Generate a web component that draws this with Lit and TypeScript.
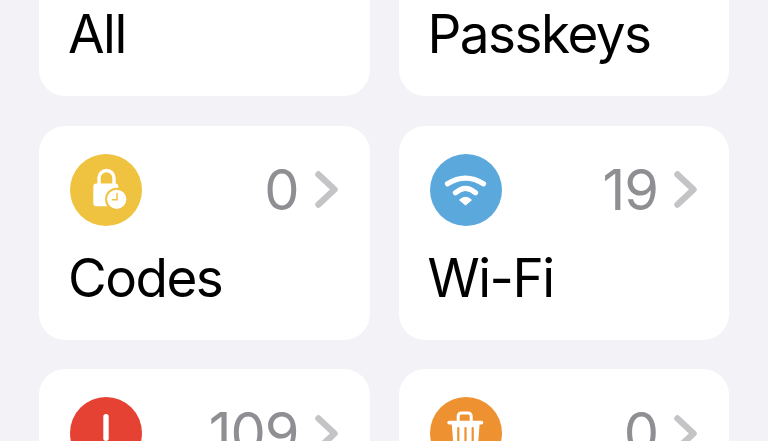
import { LitElement, html, css, svg } from 'lit';
import { customElement } from 'lit/decorators.js';

interface Tile {
  label: string;
  count: number;
  color: string;
  glyph: unknown;
}

const codesGlyph = svg`
  <path d="M29 31v-7a7.500 7.500 0 0 1 15 0V31" fill="none" stroke="#fff" stroke-width="3.400"/>
  <rect x="23.300" y="29.500" width="25" height="22.800" rx="3" fill="#fff"/>
  <circle cx="46.700" cy="45.300" r="11.600" fill="#efc23f"/>
  <circle cx="46.700" cy="45.300" r="9.600" fill="#fff"/>
  <path d="M47 39.500v6.300h-4.600" fill="none" stroke="#efc23f" stroke-width="1.500" stroke-linecap="round"/>
`;

const wifiGlyph = svg`
  <path d="M17.500 29.800Q35.500 18.500 53.500 29.800" fill="none" stroke="#fff" stroke-width="5.200" stroke-linecap="round"/>
  <path d="M25.500 38.800Q35.500 30 45.500 38.800" fill="none" stroke="#fff" stroke-width="5.200" stroke-linecap="round"/>
  <path d="M35.500 51 29.500 46Q35.500 40.500 41.500 46Z" fill="#fff" stroke="#fff" stroke-linejoin="round"/>
`;

const alertGlyph = svg`
  <rect x="33.300" y="17" width="5.400" height="27" rx="2.700" fill="#fff"/>
  <circle cx="36" cy="52" r="3.500" fill="#fff"/>
`;

const trashGlyph = svg`
  <path d="M28.200 24v-5a3 3 0 0 1 3-3h7a3 3 0 0 1 3 3V24" fill="none" stroke="#fff" stroke-width="3"/>
  <rect x="17.300" y="23.700" width="36" height="3.800" rx="1.900" fill="#fff"/>
  <path d="M21.700 26h28l-2 26a3 3 0 0 1-3 2.500H26.700a3 3 0 0 1-3-2.500Z" fill="#fff"/>
  <path d="M28.300 31v18M35.500 31v18M42.700 31v18" stroke="#ee9130" stroke-width="2.200" stroke-linecap="round"/>
`;

const TILES: Tile[] = [
  { label: 'All', count: 0, color: '#5ba9dc', glyph: null },
  { label: 'Passkeys', count: 0, color: '#5ba9dc', glyph: null },
  { label: 'Codes', count: 0, color: '#efc23f', glyph: codesGlyph },
  { label: 'Wi-Fi', count: 19, color: '#5ba9dc', glyph: wifiGlyph },
  { label: '', count: 109, color: '#e64234', glyph: alertGlyph },
  { label: '', count: 0, color: '#ee9130', glyph: trashGlyph },
];

@customElement('app-root')
export class AppRoot extends LitElement {
  static styles = css`
    :host {
      display: block;
      height: 441px;
      overflow: hidden;
      background: #f2f2f7;
      font-family: Inter, 'Liberation Sans', sans-serif;
    }
    .grid {
      display: grid;
      grid-template-columns: 1fr 1fr;
      column-gap: 29px;
      row-gap: 29.5px;
      padding: 0 39px;
      margin-top: -118px;
    }
    .card {
      box-sizing: border-box;
      height: 214px;
      padding: 28px 32px 0 31px;
      background: #fff;
      border-radius: 26px;
    }
    .head {
      display: flex;
      align-items: center;
      height: 72px;
    }
    .icon {
      display: block;
      width: 72px;
      height: 72px;
    }
    .count {
      margin-left: auto;
      font-size: 56px;
      line-height: 72px;
      color: #8e8e93;
      letter-spacing: -1px;
    }
    .chevron {
      display: block;
      width: 23px;
      height: 37px;
      margin-left: 16px;
    }
    .label {
      margin: 21px 0 0 -2px;
      font-size: 53px;
      line-height: 62px;
      color: #000;
      letter-spacing: -1.500px;
    }
  `;

  render() {
    return html`
      <div class="grid">
        ${TILES.map(t => html`
          <div class="card">
            <div class="head">
              <svg class="icon" viewBox="0 0 72 72">
                <circle cx="36" cy="36" r="36" fill=${t.color}></circle>
                ${t.glyph}
              </svg>
              <span class="count">${t.count}</span>
              <svg class="chevron" viewBox="0 0 23 37">
                <path d="M3.500 3.500 19.500 18.500 3.500 33.500" fill="none" stroke="#c4c4c7" stroke-width="6.500" stroke-linecap="round" stroke-linejoin="round"></path>
              </svg>
            </div>
            <div class="label">${t.label}</div>
          </div>
        `)}
      </div>
    `;
  }
}
